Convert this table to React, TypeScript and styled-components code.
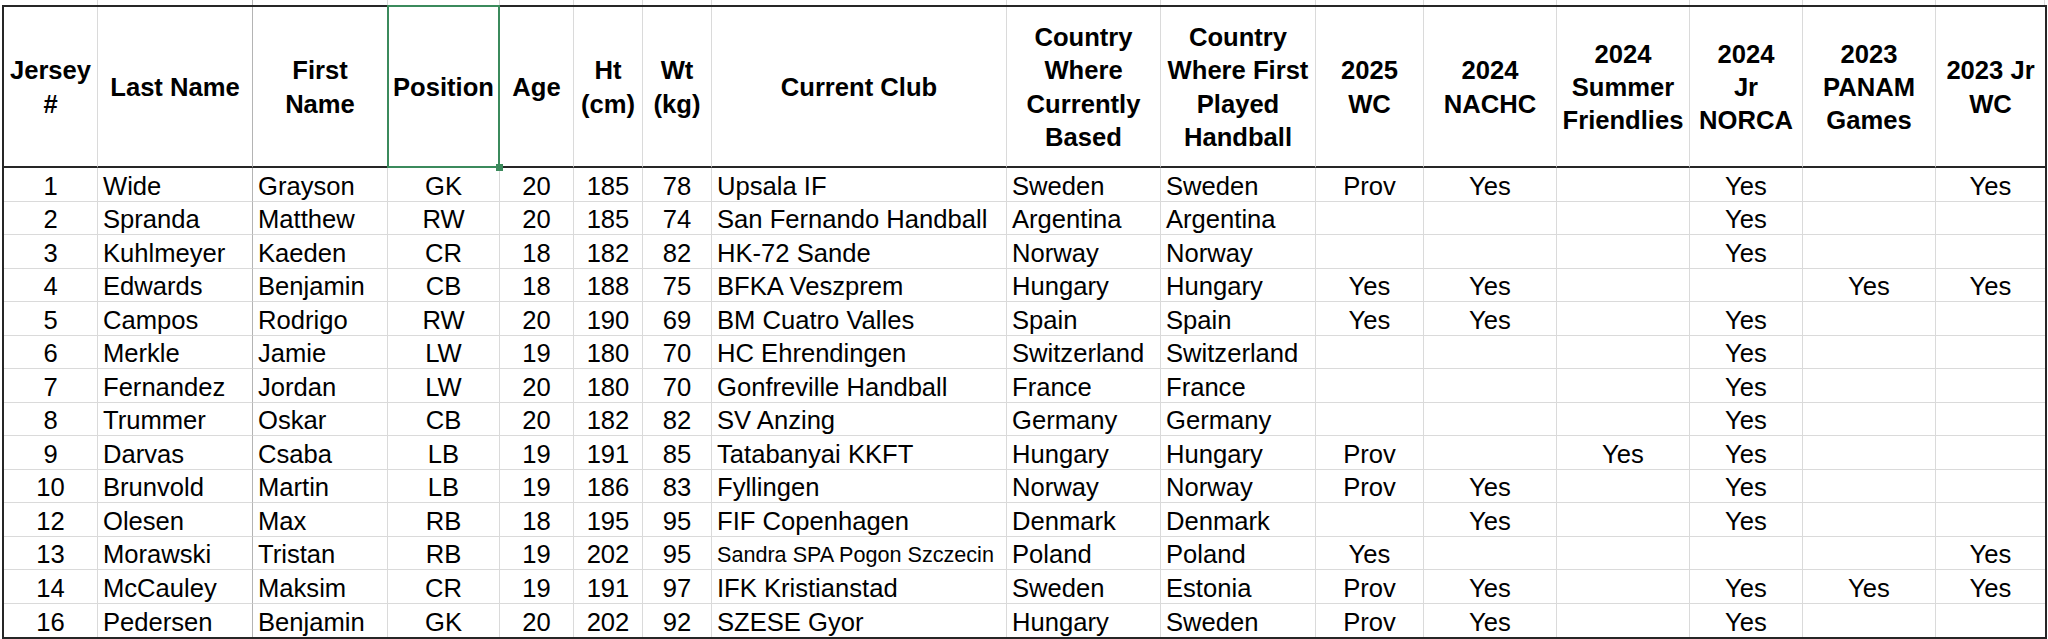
import React from 'react'
import styled, { createGlobalStyle, css } from 'styled-components'

const GRID_LINE = '#dadada'
const DARK_LINE = '#262626'
const SELECT_GREEN = '#3b8a5c'

type Align = 'left' | 'center'

const COLUMNS: { width: number; align: Align; heading: string[]; divider?: boolean }[] = [
  { width: 94, align: 'center', heading: ['Jersey', '#'] },
  { width: 155, align: 'left', heading: ['Last Name'], divider: true },
  { width: 135, align: 'left', heading: ['First', 'Name'] },
  { width: 112, align: 'center', heading: ['Position'] },
  { width: 74, align: 'center', heading: ['Age'] },
  { width: 69, align: 'center', heading: ['Ht', '(cm)'] },
  { width: 69, align: 'center', heading: ['Wt', '(kg)'] },
  { width: 295, align: 'left', heading: ['Current Club'] },
  { width: 154, align: 'left', heading: ['Country', 'Where', 'Currently', 'Based'] },
  { width: 155, align: 'left', heading: ['Country', 'Where First', 'Played', 'Handball'] },
  { width: 108, align: 'center', heading: ['2025', 'WC'] },
  { width: 133, align: 'center', heading: ['2024', 'NACHC'] },
  { width: 133, align: 'center', heading: ['2024', 'Summer', 'Friendlies'] },
  { width: 113, align: 'center', heading: ['2024', 'Jr', 'NORCA'] },
  { width: 133, align: 'center', heading: ['2023', 'PANAM', 'Games'] },
  { width: 109, align: 'center', heading: ['2023 Jr', 'WC'] },
]

const TEMPLATE = COLUMNS.map((c) => `${c.width}px`).join(' ')

const ROWS: string[][] = [
  ['1', 'Wide', 'Grayson', 'GK', '20', '185', '78', 'Upsala IF', 'Sweden', 'Sweden', 'Prov', 'Yes', '', 'Yes', '', 'Yes'],
  ['2', 'Spranda', 'Matthew', 'RW', '20', '185', '74', 'San Fernando Handball', 'Argentina', 'Argentina', '', '', '', 'Yes', '', ''],
  ['3', 'Kuhlmeyer', 'Kaeden', 'CR', '18', '182', '82', 'HK-72 Sande', 'Norway', 'Norway', '', '', '', 'Yes', '', ''],
  ['4', 'Edwards', 'Benjamin', 'CB', '18', '188', '75', 'BFKA Veszprem', 'Hungary', 'Hungary', 'Yes', 'Yes', '', '', 'Yes', 'Yes'],
  ['5', 'Campos', 'Rodrigo', 'RW', '20', '190', '69', 'BM Cuatro Valles', 'Spain', 'Spain', 'Yes', 'Yes', '', 'Yes', '', ''],
  ['6', 'Merkle', 'Jamie', 'LW', '19', '180', '70', 'HC Ehrendingen', 'Switzerland', 'Switzerland', '', '', '', 'Yes', '', ''],
  ['7', 'Fernandez', 'Jordan', 'LW', '20', '180', '70', 'Gonfreville Handball', 'France', 'France', '', '', '', 'Yes', '', ''],
  ['8', 'Trummer', 'Oskar', 'CB', '20', '182', '82', 'SV Anzing', 'Germany', 'Germany', '', '', '', 'Yes', '', ''],
  ['9', 'Darvas', 'Csaba', 'LB', '19', '191', '85', 'Tatabanyai KKFT', 'Hungary', 'Hungary', 'Prov', '', 'Yes', 'Yes', '', ''],
  ['10', 'Brunvold', 'Martin', 'LB', '19', '186', '83', 'Fyllingen', 'Norway', 'Norway', 'Prov', 'Yes', '', 'Yes', '', ''],
  ['12', 'Olesen', 'Max', 'RB', '18', '195', '95', 'FIF Copenhagen', 'Denmark', 'Denmark', '', 'Yes', '', 'Yes', '', ''],
  ['13', 'Morawski', 'Tristan', 'RB', '19', '202', '95', 'Sandra SPA Pogon Szczecin', 'Poland', 'Poland', 'Yes', '', '', '', '', 'Yes'],
  ['14', 'McCauley', 'Maksim', 'CR', '19', '191', '97', 'IFK Kristianstad', 'Sweden', 'Estonia', 'Prov', 'Yes', '', 'Yes', 'Yes', 'Yes'],
  ['16', 'Pedersen', 'Benjamin', 'GK', '20', '202', '92', 'SZESE Gyor', 'Hungary', 'Sweden', 'Prov', 'Yes', '', 'Yes', '', ''],
]

// long club names get shrunk to fit, as in the sheet
const SHRUNK = new Set(['Sandra SPA Pogon Szczecin'])

const GlobalStyle = createGlobalStyle`
  * { box-sizing: border-box; }
  html, body {
    margin: 0;
    background: #ffffff;
  }
  body {
    font-family: "Liberation Sans", Arial, sans-serif;
    color: #000000;
  }
`

const Sheet = styled.div`
  width: 2048px;
  height: 639px;
  padding-left: 2px;
  overflow: hidden;
  background: #ffffff;
`

const TopStrip = styled.div`
  display: grid;
  grid-template-columns: ${TEMPLATE};
  height: 5px;
  margin-left: 2px;
`

const StripCell = styled.div<{ $divider?: boolean }>`
  border-right: 1px solid ${(p) => (p.$divider ? '#b4b4b4' : GRID_LINE)};
`

const Table = styled.div`
  display: grid;
  grid-template-columns: ${TEMPLATE};
  width: 2045px;
  border: 2px solid ${DARK_LINE};
`

const HeaderCell = styled.div<{ $last?: boolean; $selected?: boolean; $divider?: boolean }>`
  position: relative;
  height: 161px;
  display: flex;
  flex-direction: column;
  align-items: center;
  justify-content: center;
  text-align: center;
  font-weight: 700;
  font-size: 25.6px;
  line-height: 33.3px;
  white-space: nowrap;
  border-bottom: 2px solid ${DARK_LINE};
  border-right: ${(p) => (p.$last ? 'none' : `1px solid ${p.$divider ? '#b4b4b4' : GRID_LINE}`)};
  padding-top: 2px;

  ${(p) =>
    p.$selected &&
    css`
      &::after {
        content: '';
        position: absolute;
        left: -1px;
        top: -2px;
        right: -1px;
        bottom: -2px;
        border: 2px solid ${SELECT_GREEN};
        pointer-events: none;
      }
      &::before {
        content: '';
        position: absolute;
        right: -4px;
        bottom: -5px;
        width: 7px;
        height: 7px;
        background: ${SELECT_GREEN};
        z-index: 1;
      }
    `}
`

const Cell = styled.div<{ $align: Align; $last?: boolean; $bottom?: boolean; $small?: boolean; $divider?: boolean }>`
  height: 33.5px;
  display: flex;
  align-items: flex-end;
  justify-content: ${(p) => (p.$align === 'center' ? 'center' : 'flex-start')};
  padding: 0 5px;
  font-size: ${(p) => (p.$small ? '21.6px' : '25.6px')};
  line-height: 29px;
  white-space: nowrap;
  overflow: hidden;
  border-right: ${(p) => (p.$last ? 'none' : `1px solid ${p.$divider ? '#b4b4b4' : GRID_LINE}`)};
  border-bottom: ${(p) => (p.$bottom ? 'none' : `1px solid ${GRID_LINE}`)};
`

export default function App() {
  const last = COLUMNS.length - 1
  return (
    <>
      <GlobalStyle />
      <Sheet>
        <TopStrip>
          {COLUMNS.map((c, i) => (
            <StripCell key={i} $divider={c.divider} />
          ))}
        </TopStrip>
        <Table>
          {COLUMNS.map((c, i) => (
            <HeaderCell key={`h${i}`} $last={i === last} $selected={i === 3} $divider={c.divider}>
              {c.heading.map((line) => (
                <span key={line}>{line}</span>
              ))}
            </HeaderCell>
          ))}
          {ROWS.map((row, r) =>
            row.map((value, i) => (
              <Cell
                key={`${r}-${i}`}
                $align={COLUMNS[i].align}
                $last={i === last}
                $bottom={r === ROWS.length - 1}
                $small={SHRUNK.has(value)}
                $divider={COLUMNS[i].divider}
              >
                {value}
              </Cell>
            ))
          )}
        </Table>
      </Sheet>
    </>
  )
}
